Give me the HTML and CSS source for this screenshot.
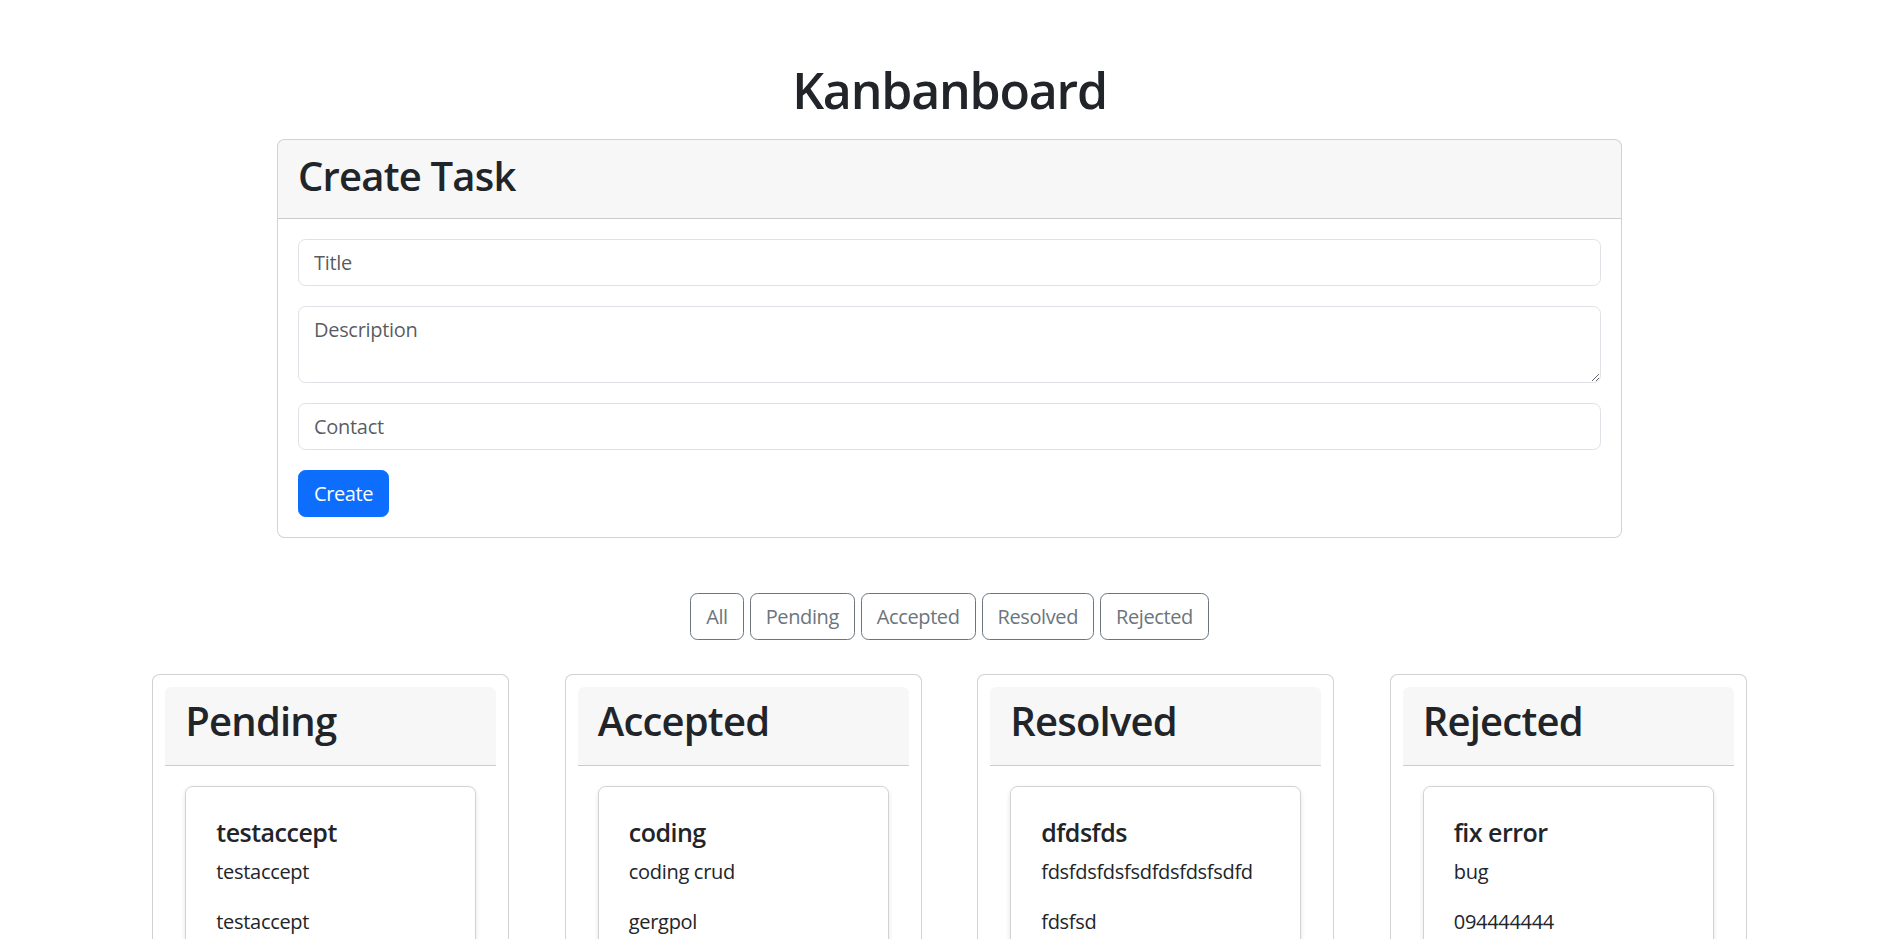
FILE: index.html
```html
<!DOCTYPE html>
<html lang="en">
<head>
    <meta charset="UTF-8">
    <meta name="viewport" content="width=device-width, initial-scale=1.0">
    <title>Kanbanboard</title>
    <link rel="stylesheet" href="styles.css">
</head>
<body>
    <div class="container">
        <h1 class="board-title">Kanbanboard</h1>

        <div class="card create-card">
            <div class="card-header">
                <h2>Create Task</h2>
            </div>
            <div class="card-body">
                <form id="createTaskForm">
                    <input type="text" class="form-control" name="title" placeholder="Title">
                    <textarea class="form-control" name="description" rows="2" placeholder="Description"></textarea>
                    <input type="text" class="form-control" name="contact" placeholder="Contact">
                    <button type="submit" class="btn btn-primary">Create</button>
                </form>
            </div>
        </div>

        <div class="filters">
            <button type="button" class="btn btn-outline">All</button>
            <button type="button" class="btn btn-outline">Pending</button>
            <button type="button" class="btn btn-outline">Accepted</button>
            <button type="button" class="btn btn-outline">Resolved</button>
            <button type="button" class="btn btn-outline">Rejected</button>
        </div>

        <div class="board">
            <div class="card column">
                <div class="card-header">
                    <h2>Pending</h2>
                </div>
                <div class="card-body">
                    <div class="task-card">
                        <h5>testaccept</h5>
                        <p>testaccept</p>
                        <p>testaccept</p>
                    </div>
                </div>
            </div>

            <div class="card column">
                <div class="card-header">
                    <h2>Accepted</h2>
                </div>
                <div class="card-body">
                    <div class="task-card">
                        <h5>coding</h5>
                        <p>coding crud</p>
                        <p>gergpol</p>
                    </div>
                </div>
            </div>

            <div class="card column">
                <div class="card-header">
                    <h2>Resolved</h2>
                </div>
                <div class="card-body">
                    <div class="task-card">
                        <h5>dfdsfds</h5>
                        <p>fdsfdsfdsfsdfdsfdsfsdfd</p>
                        <p>fdsfsd</p>
                    </div>
                </div>
            </div>

            <div class="card column">
                <div class="card-header">
                    <h2>Rejected</h2>
                </div>
                <div class="card-body">
                    <div class="task-card">
                        <h5>fix error</h5>
                        <p>bug</p>
                        <p>094444444</p>
                    </div>
                </div>
            </div>
        </div>
    </div>
</body>
</html>
```

FILE: styles.css
```css
html {
    scrollbar-width: none;
}
body {
    margin: 0;
    font-family: "Open Sans", "Noto Sans", sans-serif;
    font-size: 20px;
    line-height: 1.5;
    letter-spacing: -0.3px;
    color: #212529;
    background-color: #fff;
}
.container {
    width: 1650px;
    margin: 0 auto;
    padding-top: 60px;
}
h1, h2, h5 {
    margin: 0;
    font-weight: 560;
    line-height: 1.2;
}
.board-title {
    text-align: center;
    font-size: 50px;
    letter-spacing: -1.2px;
    margin-bottom: 19px;
}
.card {
    border: 1px solid rgba(0,0,0,0.175);
    border-radius: 7.5px;
    background-color: #fff;
}
.card-header {
    padding: 10px 20px;
    background-color: rgba(0,0,0,0.03);
    border-bottom: 1px solid rgba(0,0,0,0.175);
}
.card-header h2 {
    font-size: 40px;
    letter-spacing: -0.8px;
    margin-bottom: 10px;
}
.card-body {
    padding: 20px;
}
.create-card {
    width: 1345px;
    margin: 0 auto;
    box-sizing: border-box;
}
.create-card .card-header {
    border-radius: 6.5px 6.5px 0 0;
}
.create-card .card-header h2 {
    padding-top: 2px;
    margin-bottom: 8px;
}
.form-control {
    display: block;
    width: 100%;
    box-sizing: border-box;
    padding: 8px 15px 7px;
    margin-bottom: 20px;
    font-family: inherit;
    font-size: 20px;
    line-height: 1.5;
    letter-spacing: -0.3px;
    color: #212529;
    border: 1px solid #dee2e6;
    border-radius: 7.5px;
}
.form-control::placeholder {
    color: rgba(33,37,41,0.75);
}
.btn {
    display: inline-block;
    padding: 7.5px 15px;
    font-family: inherit;
    font-size: 20px;
    line-height: 1.5;
    letter-spacing: -0.4px;
    border: 1px solid transparent;
    border-radius: 7.5px;
    cursor: pointer;
}
.btn-primary {
    color: #fff;
    background-color: #0d6efd;
    border-color: #0d6efd;
}
.btn-outline {
    color: #6c757d;
    background-color: transparent;
    border-color: #6c757d;
}
.filters {
    display: flex;
    justify-content: center;
    gap: 6px;
    margin-top: 55px;
    margin-bottom: 34px;
}
.board {
    display: grid;
    grid-template-columns: repeat(4, 1fr);
}
.column {
    margin: 0 27.75px;
    padding: 12px;
}
.column .card-header {
    border-radius: 6px 6px 0 0;
}
.task-card {
    border: 1px solid rgba(0,0,0,0.175);
    border-radius: 7.5px;
    box-shadow: 0 2.5px 5px rgba(0,0,0,0.1);
    padding: 30px;
}
.task-card h5 {
    font-size: 25px;
    letter-spacing: -0.5px;
    margin-bottom: 10px;
}
.task-card p {
    margin: 0 0 20px;
}
```
